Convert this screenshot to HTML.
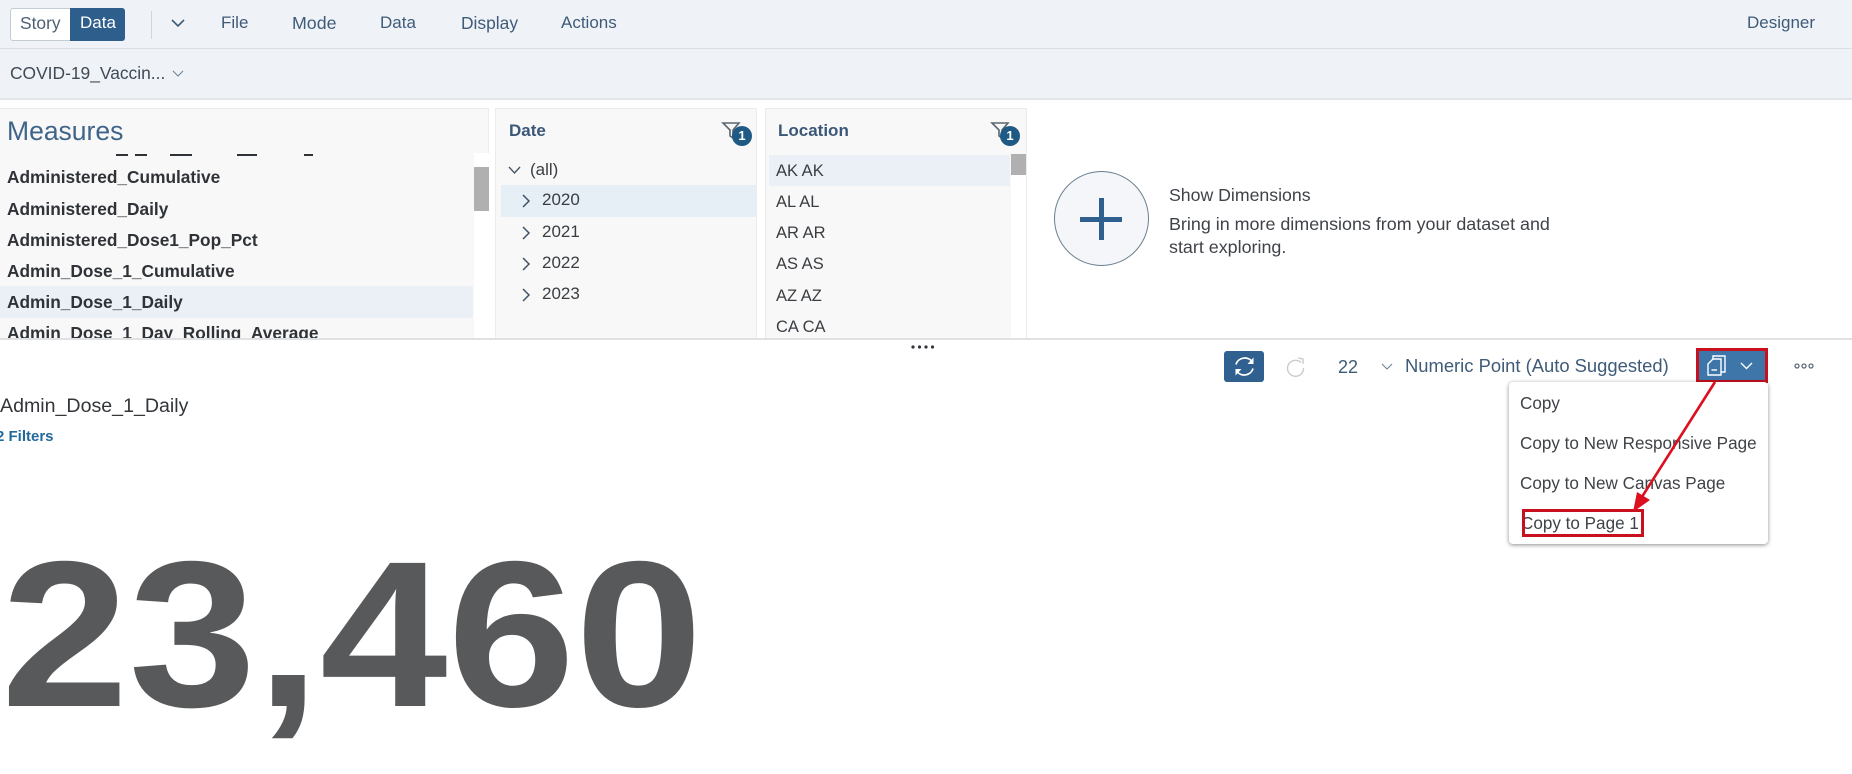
<!DOCTYPE html>
<html><head><meta charset="utf-8"><style>
html,body{margin:0;padding:0;background:#fff}
body{width:1852px;height:746px;overflow:hidden;position:relative;font-family:"Liberation Sans",sans-serif;color:#32363a}
.a{position:absolute;white-space:nowrap}
.t{position:absolute;white-space:nowrap;line-height:24px;height:24px}
.m{color:#3f5b78;font-size:17px}
.b{font-weight:bold;font-size:17.3px;color:#2f3338}
.r{font-size:17px;color:#3a3e42}
.l{font-size:16.5px;color:#3a3e42}
.h{font-weight:bold;font-size:17px;color:#3b5878}
.i{font-size:17.1px;color:#3f4348}
.f{position:absolute;top:154px;height:2px;background:#2f3338}
svg{position:absolute;overflow:visible}
</style></head><body>
<!-- top bars -->
<div class="a" style="left:0;top:0;width:1852px;height:48px;background:#eff3f8"></div>
<div class="a" style="left:0;top:48px;width:1852px;height:1px;background:#d9dfe5"></div>
<div class="a" style="left:0;top:49px;width:1852px;height:49px;background:#eff3f8"></div>
<div class="a" style="left:0;top:98px;width:1852px;height:2px;background:#e3e6e9"></div>
<!-- toggle -->
<div class="a" style="left:10px;top:8px;width:115px;height:33px;background:#fff;border:1px solid #c4ccd4;border-radius:3px;box-sizing:border-box"></div>
<div class="a" style="left:70px;top:8px;width:55px;height:33px;background:#2e5f8c;border-radius:0 3px 3px 0"></div>
<div class="t m" style="left:20px;top:11px;color:#4d5f72;font-size:17.4px">Story</div>
<div class="t" style="left:80px;top:11px;color:#fff;font-size:17px">Data</div>
<div class="a" style="left:151px;top:11px;width:1px;height:28px;background:#cfd6dc"></div>
<svg style="left:171px;top:18px" width="14" height="10"><path d="M1 2L7 8L13 2" fill="none" stroke="#3f5b78" stroke-width="1.6"/></svg>
<div class="t m" style="left:221px;top:11px">File</div>
<div class="t m" style="left:292px;top:11px;font-size:17.8px">Mode</div>
<div class="t m" style="left:380px;top:11px">Data</div>
<div class="t m" style="left:461px;top:11px;font-size:17.4px">Display</div>
<div class="t m" style="left:561px;top:11px">Actions</div>
<div class="t m" style="left:1747px;top:11px">Designer</div>
<div class="t" style="left:10px;top:61px;font-size:17.4px;color:#3f4a55">COVID-19_Vaccin...</div>
<svg style="left:172px;top:70px" width="12" height="8"><path d="M1 1L6 6L11 1" fill="none" stroke="#6f8296" stroke-width="1.1"/></svg>

<!-- Measures panel -->
<div class="a" style="left:0;top:108px;width:489px;height:231px;background:#f8f8f8;border:1px solid #ececec;border-left:0;box-sizing:border-box;overflow:hidden"></div>
<div class="a" style="left:474px;top:153px;width:15px;height:186px;background:#fff"></div>
<div class="a" style="left:474px;top:167px;width:15px;height:44px;background:#b0b0b0"></div>
<div class="t" style="left:7px;top:119px;font-size:26.5px;color:#3f6489">Measures</div>
<i class="f" style="left:116px;width:12px"></i><i class="f" style="left:135px;width:12px"></i><i class="f" style="left:170px;width:22px"></i><i class="f" style="left:237px;width:20px"></i><i class="f" style="left:304px;width:9px"></i>
<div class="a" style="left:0;top:286px;width:473px;height:32px;background:#ebf0f6"></div>
<div class="t b" style="left:7px;top:165px">Administered_Cumulative</div>
<div class="t b" style="left:7px;top:197px">Administered_Daily</div>
<div class="t b" style="left:7px;top:228px">Administered_Dose1_Pop_Pct</div>
<div class="t b" style="left:7px;top:259px">Admin_Dose_1_Cumulative</div>
<div class="t b" style="left:7px;top:290px">Admin_Dose_1_Daily</div>
<div class="a" style="left:0;top:322px;width:473px;height:16px;overflow:hidden"><div class="t b" style="left:7px;top:-1px">Admin_Dose_1_Day_Rolling_Average</div></div>

<!-- Date panel -->
<div class="a" style="left:495px;top:108px;width:262px;height:231px;background:#f8f8f8;border:1px solid #ececec;box-sizing:border-box"></div>
<div class="t h" style="left:509px;top:119px">Date</div>
<svg style="left:722px;top:122px" width="18" height="18"><path d="M1 1H17L11 8V16L8 14V8Z" fill="none" stroke="#5a6570" stroke-width="1.6"/></svg>
<div class="a" style="left:732px;top:126px;width:20px;height:20px;border-radius:50%;background:#1f5a85;color:#fff;font-size:13px;font-weight:bold;text-align:center;line-height:20px">1</div>
<svg style="left:508px;top:166px" width="13" height="9"><path d="M1 1L6.5 7L12 1" fill="none" stroke="#47586a" stroke-width="1.4"/></svg>
<div class="t r" style="left:530px;top:158px">(all)</div>
<div class="a" style="left:501px;top:185px;width:255px;height:32px;background:#e6eef6"></div>
<svg style="left:522px;top:194px" width="9" height="14"><path d="M1 1L7 7L1 13" fill="none" stroke="#40546a" stroke-width="1.5"/></svg>
<div class="t r" style="left:542px;top:188px">2020</div>
<svg style="left:522px;top:226px" width="9" height="14"><path d="M1 1L7 7L1 13" fill="none" stroke="#40546a" stroke-width="1.5"/></svg>
<div class="t r" style="left:542px;top:220px">2021</div>
<svg style="left:522px;top:257px" width="9" height="14"><path d="M1 1L7 7L1 13" fill="none" stroke="#40546a" stroke-width="1.5"/></svg>
<div class="t r" style="left:542px;top:251px">2022</div>
<svg style="left:522px;top:288px" width="9" height="14"><path d="M1 1L7 7L1 13" fill="none" stroke="#40546a" stroke-width="1.5"/></svg>
<div class="t r" style="left:542px;top:282px">2023</div>

<!-- Location panel -->
<div class="a" style="left:765px;top:108px;width:262px;height:231px;background:#f8f8f8;border:1px solid #ececec;box-sizing:border-box"></div>
<div class="a" style="left:1011px;top:154px;width:15px;height:185px;background:#fff"></div>
<div class="a" style="left:1011px;top:154px;width:15px;height:21px;background:#b0b0b0"></div>
<div class="t h" style="left:778px;top:119px">Location</div>
<svg style="left:991px;top:122px" width="18" height="18"><path d="M1 1H17L11 8V16L8 14V8Z" fill="none" stroke="#5a6570" stroke-width="1.6"/></svg>
<div class="a" style="left:1000px;top:126px;width:20px;height:20px;border-radius:50%;background:#1f5a85;color:#fff;font-size:13px;font-weight:bold;text-align:center;line-height:20px">1</div>
<div class="a" style="left:769px;top:155px;width:241px;height:31px;background:#ebf0f6"></div>
<div class="t l" style="left:776px;top:159px">AK AK</div>
<div class="t l" style="left:776px;top:190px">AL AL</div>
<div class="t l" style="left:776px;top:221px">AR AR</div>
<div class="t l" style="left:776px;top:252px">AS AS</div>
<div class="t l" style="left:776px;top:284px">AZ AZ</div>
<div class="t l" style="left:776px;top:315px">CA CA</div>

<!-- Show dimensions -->
<div class="a" style="left:1054px;top:171px;width:95px;height:95px;border-radius:50%;background:#f4f6f9;border:1px solid #6b7f90;box-sizing:border-box"></div>
<div class="a" style="left:1080px;top:217px;width:42px;height:5px;background:#2f5f8f"></div>
<div class="a" style="left:1099px;top:198px;width:5px;height:42px;background:#2f5f8f"></div>
<div class="t i" style="left:1169px;top:183px;font-size:17.7px">Show Dimensions</div>
<div class="t i" style="left:1169px;top:212px;font-size:17.9px">Bring in more dimensions from your dataset and</div>
<div class="t i" style="left:1169px;top:235px;font-size:17.9px">start exploring.</div>

<!-- divider -->
<div class="a" style="left:0;top:338px;width:1852px;height:2px;background:#dfe1e3"></div>
<svg style="left:911px;top:345px" width="24" height="4"><g fill="#32363a"><circle cx="2" cy="2" r="1.6"/><circle cx="8.5" cy="2" r="1.6"/><circle cx="15" cy="2" r="1.6"/><circle cx="21.5" cy="2" r="1.6"/></g></svg>

<!-- chart toolbar -->
<div class="a" style="left:1224px;top:351px;width:40px;height:31px;background:#2f608f;border-radius:3px"></div>
<svg style="left:1233px;top:355px" width="23" height="23" viewBox="0 0 23 23"><g fill="none" stroke="#fff" stroke-width="1.7"><path d="M3 9.5A9 8.5 0 0 1 19 6.5"/><path d="M20 13.5A9 8.5 0 0 1 4 16.5"/></g><path d="M20.5 2.5V9H14.5Z" fill="#fff"/><path d="M2.5 20.5V14H8.5Z" fill="#fff"/></svg>
<svg style="left:1286px;top:357px" width="20" height="20" viewBox="0 0 20 20"><path d="M15 5.5A8 8 0 1 0 17.5 11" fill="none" stroke="#c9cccf" stroke-width="1.4"/><path d="M12 1L17 2V7" fill="none" stroke="#c9cccf" stroke-width="1.4"/></svg>
<div class="t" style="left:1338px;top:355px;font-size:18px;color:#3f5b78">22</div>
<svg style="left:1381px;top:363px" width="12" height="8"><path d="M1 1L6 6L11 1" fill="none" stroke="#6f8296" stroke-width="1.1"/></svg>
<div class="t" style="left:1405px;top:354px;font-size:18.4px;color:#3f5b78">Numeric Point (Auto Suggested)</div>
<div class="a" style="left:1696px;top:348px;width:72px;height:35px;background:#3f76aa;border:3px solid #c8101e;box-sizing:border-box"></div>
<svg style="left:1707px;top:355px" width="20" height="22" viewBox="0 0 20 22"><g fill="none" stroke="#fff" stroke-width="1.4"><path d="M6 4V1H18V17H14"/><path d="M6 4H14V20H1V9L6 4Z"/><path d="M4.5 15H10"/></g></svg>
<svg style="left:1740px;top:362px" width="13" height="8"><path d="M1 1L6.5 6.5L12 1" fill="none" stroke="#fff" stroke-width="1.4"/></svg>
<svg style="left:1794px;top:362px" width="20" height="8"><g fill="none" stroke="#5e6b78" stroke-width="1.3"><circle cx="3" cy="4" r="2"/><circle cx="10" cy="4" r="2"/><circle cx="17" cy="4" r="2"/></g></svg>

<!-- Content -->
<div class="t" style="left:0;top:394px;font-size:19.6px;color:#32363a">Admin_Dose_1_Daily</div>
<div class="t" style="left:-4px;top:425px;font-size:15px;font-weight:bold;color:#1f6a9b">2 Filters</div>
<div class="a" style="left:1px;top:496px;font-size:208px;font-weight:bold;line-height:278px;color:#58595b;transform:scaleX(1.103);transform-origin:0 0">23,460</div>

<!-- Menu -->
<div class="a" style="left:1509px;top:382px;width:259px;height:162px;background:#fff;border-radius:4px;box-shadow:0 1px 4px rgba(0,0,0,.45)"></div>
<div class="t i" style="left:1520px;top:392px">Copy</div>
<div class="t i" style="left:1520px;top:432px">Copy to New Responsive Page</div>
<div class="t i" style="left:1520px;top:472px">Copy to New Canvas Page</div>
<div class="t i" style="left:1521px;top:512px">Copy to Page 1</div>
<div class="a" style="left:1522px;top:509px;width:122px;height:28px;border:3px solid #c8101e;box-sizing:border-box"></div>
<svg style="left:0;top:0" width="1852" height="746"><path d="M1715 382L1640 500" stroke="#dc0f1e" stroke-width="2.6" fill="none"/><path d="M1633 512L1637 492L1650 500Z" fill="#dc0f1e"/></svg>
</body></html>
